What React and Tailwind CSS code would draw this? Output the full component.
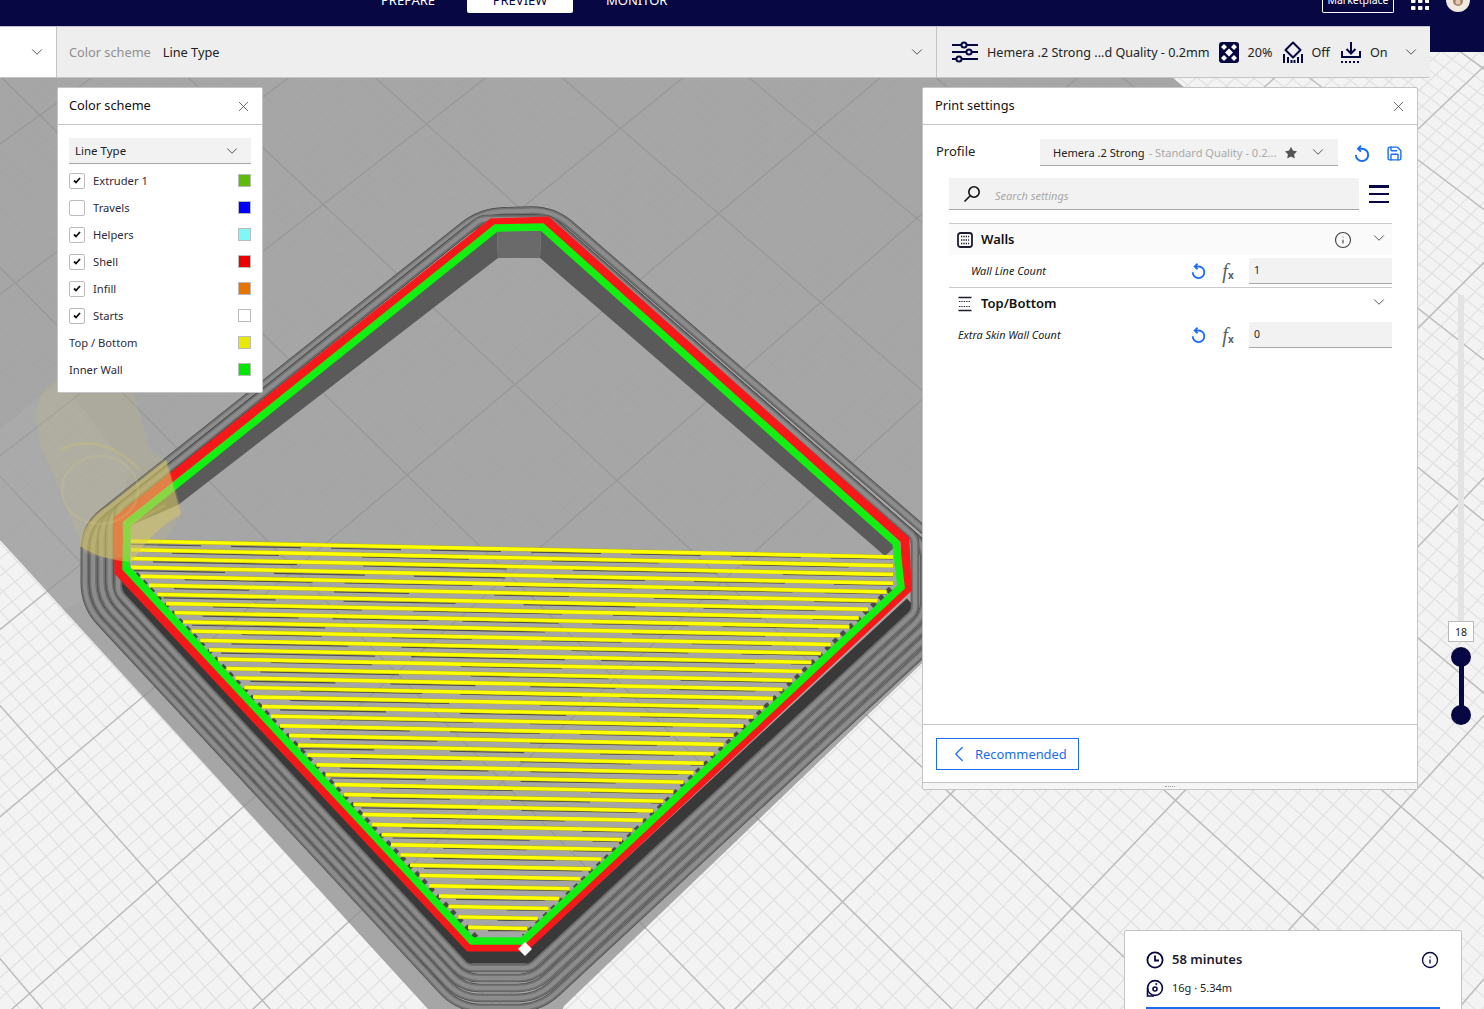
import { ChevronDown, ChevronLeft, Info, Save, Star, X } from 'lucide-react';

// --- 3D viewport drawing ---
const VP_A = [-4378, -4215];
const VP_B = [5875, -4115];

// line from a vanishing point through (x, 1009), run on past the bottom of the page
function gridLine(vp, x, key, props) {
    const t = 1.3;
    return <line key={key} x1={vp[0]} y1={vp[1]} x2={vp[0] + (x - vp[0]) * t} y2={vp[1] + (1009 - vp[1]) * t} {...props} />;
}

function Grid({ minor, major, minorWidth = 1.2, majorWidth = 1.5 }) {
    const lines = [];
    for (let k = -120; k <= 160; k++) {
        const isMajor = k % 10 === 0;
        const props = { stroke: isMajor ? major : minor, strokeWidth: isMajor ? majorWidth : minorWidth };
        lines.push({ z: isMajor ? 1 : 0, el: gridLine(VP_A, 270 + 22.73 * k, `a${k}`, props) });
        lines.push({ z: isMajor ? 1 : 0, el: gridLine(VP_B, 253 + 24.1 * k, `b${k}`, props) });
    }
    return <g>{lines.sort((a, b) => a.z - b.z).map((l) => l.el)}</g>;
}

function roundPath(pts, r) {
    const n = pts.length;
    let d = '';
    pts.forEach((p, i) => {
        const a = pts[(i - 1 + n) % n];
        const b = pts[(i + 1) % n];
        const la = Math.hypot(a[0] - p[0], a[1] - p[1]);
        const lb = Math.hypot(b[0] - p[0], b[1] - p[1]);
        const ra = Math.min(r, la / 2);
        const rb = Math.min(r, lb / 2);
        const s = [p[0] + ((a[0] - p[0]) * ra) / la, p[1] + ((a[1] - p[1]) * ra) / la];
        const e = [p[0] + ((b[0] - p[0]) * rb) / lb, p[1] + ((b[1] - p[1]) * rb) / lb];
        d += `${i === 0 ? 'M' : 'L'}${s[0]} ${s[1]} Q${p[0]} ${p[1]} ${e[0]} ${e[1]} `;
    });
    return d + 'Z';
}

function ringPoints(n) {
    const d = 10 + 12.2 * n;
    const bottom = 958 + 10 * n;
    const xl = 118 - 8.3 * (n - 1);
    const xr = 915 + 9.5 * (n - 1);
    const yR = (x) => 592 + (912 - x) * 0.927 + d;
    const lower = [
        [xr, yR(xr)],
        [912 - (bottom - 592 - d) / 0.927, bottom],
        [118 + (bottom - 570 - d) / 1.077, bottom],
        [xl, 570 + (xl - 118) * 1.077 + d],
    ];
    // the outermost ring runs apart from the others along the two back edges
    if (n === 5) return [...lower, [85, 527], [481, 212], [553, 210], [940, 544]];
    return [...lower, [xl, 470 + (167 - xl) * 0.8], [481, 219], [549, 219], [xr, 219 + (xr - 549) * 0.87]];
}

const RINGS = [5, 4, 3, 2, 1].map((n) => roundPath(ringPoints(n), n === 1 ? 6 : 8 + n * 3));

const INFILL = (() => {
    const out = [];
    let base = 541;
    for (let i = 0; i < 41; i++) {
        const yAt = (x) => base + 0.021 * (x - 130);
        let xL = 131;
        let xR = 893;
        for (let k = 0; k < 3; k++) {
            const yl = yAt(xL);
            const yr = yAt(xR);
            xL = yl <= 570 ? 131 : 127 + (yl - 567) / 1.072 + 5;
            xR = yr <= 585 ? 893 : 899 - (yr - 585) / 0.936 - 5;
        }
        out.push({ xL, xR, yL: yAt(xL), yR: yAt(xR), i });
        base += 8.7 + i * 0.04;
    }
    return out;
})();

const SHELL = 'M118 520 L492 223 L547 221 L905 540 L907 589 L525 947 L469 947 L119 572 Z';
const INNER = 'M127 524 L496 228 L542 227 L896 543 L901 587 L523 941 L472 941 L126 568 Z';

function Scene() {
    const floor = 'M0 78 L1173 78 L1190 92 L1000 590 L922 663 L563 1007 L563 1009 L428 1009 L0 540 Z';
    return (
        <svg className="absolute inset-0" width="1484" height="1009" viewBox="0 0 1484 1009">
            <defs>
                <clipPath id="floor-clip">
                    <path d={floor} />
                </clipPath>
            </defs>
            <rect width="1484" height="1009" fill="#f3f3f3" />
            <Grid minor="#e1e1e1" major="#bcbcbc" />
            <path d={floor} fill="#a6a6a6" />
            <g clipPath="url(#floor-clip)">
                <Grid minor="#a4a4a4" major="#989898" minorWidth={1} majorWidth={1.3} />
            </g>
            <path d="M0 430 L60 380 L130 470 L90 600 L60 610 L0 540 Z" fill="#fff" opacity="0.05" />

            {/* inner walls */}
            <polygon points="497,229 498,258 178,505 127,527" fill="#5a5a5a" />
            <polygon points="541,228 540,258 885,556 897,545" fill="#5a5a5a" />
            <polygon points="497,230 541,230 540,258 498,258" fill="#6a6a6a" />

            {/* top layer */}
            <path d="M134 575 L476 940 M892 590 L525 938" stroke="#4a4a4a" strokeWidth="9" strokeDasharray="5 5.5" fill="none" />
            <g fill="none" strokeLinecap="butt">
                {INFILL.map((l) => (
                    <line
                        key={`d${l.i}`}
                        x1={l.xL + ((l.i * 41) % 60)}
                        y1={l.yL + 3.4}
                        x2={l.xR}
                        y2={l.yR + 2}
                        stroke="#4c4c4c"
                        strokeWidth="1.2"
                        strokeDasharray={`${70 + ((l.i * 37) % 90)} ${30 + ((l.i * 53) % 70)}`}
                    />
                ))}
                {INFILL.map((l) => (
                    <line key={`o${l.i}`} x1={l.xL} y1={l.yL} x2={l.xR} y2={l.yR} stroke="#b5b500" strokeWidth="4.2" />
                ))}
                {INFILL.map((l) => (
                    <line key={`y${l.i}`} x1={l.xL} y1={l.yL} x2={l.xR} y2={l.yR} stroke="#ffff00" strokeWidth="3.4" />
                ))}
            </g>

            {/* skirt */}
            <g fill="none">
                <path d="M118 584 L465 956 L532 956 L912 604" stroke="#393939" strokeWidth="15" />
                {RINGS.map((d, i) => (
                    <g key={i}>
                        <path d={d} stroke="#4a4a4a" strokeWidth="8.6" />
                        <path d={d} stroke="#717171" strokeWidth="7.4" />
                        <path d={d} stroke="#8c8c8c" strokeWidth="4" />
                    </g>
                ))}
            </g>

            {/* shell and inner wall */}
            <g fill="none" strokeLinejoin="miter">
                <path d={SHELL} stroke="#f71919" strokeWidth="9" />
                <path d={INNER} stroke="#12f012" strokeWidth="7.5" />
            </g>
            <polygon points="525,942 532,949 525,956 518,949" fill="#fff" />

            {/* print head */}
            <path d="M36 420 Q36 390 56 380 L128 380 Q140 410 150 450 L168 462 L182 512 Q170 540 150 550 Q110 565 84 552 L60 490 L40 445 Z" fill="#c9c07e" opacity="0.2" />
            <path d="M80 546 Q82 522 108 506 L166 460 L181 514 Q150 532 132 562 Q100 560 80 546 Z" fill="#d8c860" opacity="0.5" />
            <path d="M130 525 L165 505 M60 450 Q100 430 140 470" stroke="#d8c860" strokeWidth="3" fill="none" opacity="0.25" />
            <ellipse cx="100" cy="490" rx="38" ry="34" fill="none" stroke="#d8ce86" strokeWidth="2.5" opacity="0.2" />
        </svg>
    );
}

// --- small icons ---
const NAVY = '#070743';

function Chev({ className = '' }) {
    return (
        <span className={`flex w-[14px] shrink-0 justify-center text-[#444] ${className}`}>
            <ChevronDown size={18} strokeWidth={1.2} className="shrink-0" />
        </span>
    );
}

function Sliders() {
    return (
        <svg width="26" height="22" viewBox="0 0 26 22" fill="none" stroke={NAVY} strokeWidth="2">
            <path d="M0 4H9M15 4H26M0 11H14M20 11H26M0 18H4M10 18H26" />
            <circle cx="12" cy="4" r="2.6" />
            <circle cx="17" cy="11" r="2.6" />
            <circle cx="7" cy="18" r="2.6" />
        </svg>
    );
}

function InfillIcon() {
    return (
        <svg width="20" height="21" viewBox="0 0 20 21">
            <rect width="20" height="21" rx="3" fill={NAVY} />
            <g fill="#fff">
                <polygon points="10,6.5 14,10.5 10,14.5 6,10.5" />
                <polygon points="5,2 8,5 5,8 2,5" />
                <polygon points="15,2 18,5 15,8 12,5" />
                <polygon points="5,13 8,16 5,19 2,16" />
                <polygon points="15,13 18,16 15,19 12,16" />
            </g>
        </svg>
    );
}

function SupportIcon() {
    return (
        <svg width="20" height="22" viewBox="0 0 20 22" fill="none" stroke={NAVY}>
            <path d="M10 1.5 L17.5 9 L10 16.5 L2.5 9 Z" strokeWidth="2" strokeLinejoin="round" />
            <path d="M1 13V22M5 16V22M8.5 19V22M11.5 19V22M15 16V22M19 13V22" strokeWidth="2" />
        </svg>
    );
}

function AdhesionIcon() {
    return (
        <svg width="20" height="21" viewBox="0 0 20 21" fill="none" stroke={NAVY} strokeWidth="2">
            <path d="M10 0V11M5.5 7L10 11.5L14.5 7" />
            <path d="M1 9V15H19V9" />
            <path d="M0 20H20" strokeDasharray="2 2" />
        </svg>
    );
}

function WallsIcon() {
    return (
        <svg width="16" height="16" viewBox="0 0 16 16" fill="none" stroke="#1c1c2e">
            <rect x="1" y="1" width="14" height="14" rx="2.5" strokeWidth="1.8" />
            <path d="M4 4.5H12M4 8H12M4 11.5H12" strokeWidth="1.3" strokeDasharray="1.3 1.05" />
        </svg>
    );
}

function TopBottomIcon() {
    return (
        <svg width="16" height="16" viewBox="0 0 16 16" fill="none" stroke="#1c1c2e">
            <path d="M1.5 1.5H14.5M1.5 14.5H14.5" strokeWidth="1.5" />
            <path d="M2 5.5H14M2 10.5H14" strokeWidth="1.2" strokeDasharray="1.3 1.1" />
        </svg>
    );
}

function SpoolIcon() {
    return (
        <svg width="18" height="18" viewBox="0 0 18 18" fill="none" stroke={NAVY} strokeWidth="1.6">
            <circle cx="9" cy="9" r="7.4" />
            <circle cx="9" cy="10" r="2" />
            <path d="M9.5 4.5L11 5.5" />
            <path d="M1.5 9V17H8" />
        </svg>
    );
}

function FxIcon() {
    return (
        <span className="relative flex h-[18px] w-[16px] shrink-0 items-center justify-center font-['Liberation_Serif',serif] text-[20px] italic leading-none text-[#5f5f5f]">
            f<span className="mt-[8px] font-['Noto_Sans',sans-serif] text-[10px] font-bold not-italic leading-none">x</span>
        </span>
    );
}

function Undo({ size = 16 }) {
    return (
        <svg width={size} height={size} viewBox="0 0 16 16" fill="none" stroke="#196ef0" strokeWidth="1.8" className="shrink-0">
            <path d="M5 3.5H8.5A5.8 5.8 0 1 1 2.7 9.3" />
            <path d="M7.5 0.7L4.7 3.5L7.5 6.3" />
        </svg>
    );
}

// --- panels ---
const COLORS = [
    { label: 'Extruder 1', color: 'bg-[#5fbb0a]', check: true },
    { label: 'Travels', color: 'bg-[#0000ff]', check: false },
    { label: 'Helpers', color: 'bg-[#7ff7f7]', check: true },
    { label: 'Shell', color: 'bg-[#ee0000]', check: true },
    { label: 'Infill', color: 'bg-[#e87400]', check: true },
    { label: 'Starts', color: 'bg-white', check: true },
    { label: 'Top / Bottom', color: 'bg-[#e8e800]' },
    { label: 'Inner Wall', color: 'bg-[#00e800]' },
];

function PanelHead({ title, pad }) {
    return (
        <div className={`flex h-[37px] shrink-0 items-center justify-between border-b border-[#c4c4c4] text-[12.75px] text-[#111] ${pad}`}>
            <span>{title}</span>
            <X size={17} strokeWidth={1.1} className="text-[#444]" />
        </div>
    );
}

function ColorPanel() {
    return (
        <div className="absolute left-[57px] top-[87px] flex h-[306px] w-[206px] flex-col rounded-[2px] border border-[#c4c4c4] bg-white">
            <PanelHead title="Color scheme" pad="pl-[11px] pr-[10px]" />
            <div className="px-[11px] pt-[13px]">
                <div className="flex h-[26px] items-center justify-between border-b border-[#a8a8a8] bg-[#f2f2f2] pl-[6px] pr-[12px] text-[11.5px] text-[#222]">
                    <span>Line Type</span>
                    <Chev />
                </div>
                <div className="mt-[4px] flex flex-col">
                    {COLORS.map((c) => (
                        <div key={c.label} className="flex h-[27px] items-center text-[11.2px] text-[#2b2b3a]">
                            {c.check !== undefined && (
                                <span className="mb-[2px] mr-[8px] flex h-[16px] w-[16px] items-center justify-center rounded-[2px] border border-[#bbb] bg-white">
                                    {c.check && (
                                        <svg width="8" height="7" viewBox="0 0 8 7" fill="none" stroke="#111" strokeWidth="1.8">
                                            <path d="M1 3.5L3 5.5L7 1" />
                                        </svg>
                                    )}
                                </span>
                            )}
                            <span>{c.label}</span>
                            <span className={`mb-[2px] ml-auto h-[13px] w-[13px] border border-[#bbb] ${c.color}`} />
                        </div>
                    ))}
                </div>
            </div>
        </div>
    );
}

function SettingRow({ label, value, indent }) {
    return (
        <div className="flex h-[32px] items-center">
            <span className={`pt-[1px] text-[10.85px] italic text-[#222] ${indent}`}>{label}</span>
            <span className="ml-auto mr-[14px]"><Undo /></span>
            <span className="mr-[13px]"><FxIcon /></span>
            <div className="flex h-[26px] w-[143px] items-center border-b border-[#a8a8a8] bg-[#f2f2f2] pl-[5px] pt-[1px] text-[10.5px] text-[#222]">{value}</div>
        </div>
    );
}

function SettingsPanel() {
    return (
        <div className="absolute left-[922px] top-[87px] flex h-[703px] w-[496px] flex-col rounded-[2px] border border-[#c4c4c4] bg-white">
            <PanelHead title="Print settings" pad="pl-[12px] pr-[10px]" />
            <div className="flex-1 pl-[13px]">
                <div className="mt-[14px] flex h-[26px] items-center">
                    <span className="w-[104px] text-[13px] text-[#222]">Profile</span>
                    <div className="flex h-[27px] w-[298px] items-center border-b border-[#a8a8a8] bg-[#f2f2f2] pl-[13px] pr-[13px] pt-[3px] text-[11.1px]">
                        <span className="text-[#222]">Hemera .2 Strong</span>
                        <span className="ml-[4px] text-[#a9a9a9]">- Standard Quality - 0.2...</span>
                        <Star size={14} fill="#555" strokeWidth={0} className="ml-auto mr-[13px] shrink-0" />
                        <Chev className="-mt-[2px]" />
                    </div>
                    <span className="ml-[15px] mt-[2px]"><Undo size={17} /></span>
                    <Save size={17} strokeWidth={2} className="ml-[16px] mt-[2px] text-[#196ef0]" />
                </div>
                <div className="mt-[13px] flex items-center pl-[13px]">
                    <div className="flex h-[32px] w-[410px] items-center border-b border-[#a8a8a8] bg-[#f2f2f2] pl-[14px] text-[11px] italic text-[#a9a9a9]">
                        <svg width="18" height="18" viewBox="0 0 18 18" fill="none" stroke="#111" strokeWidth="1.6">
                            <circle cx="11" cy="7" r="5.2" />
                            <path d="M7 11L1.5 16.5" />
                        </svg>
                        <span className="ml-[14px] pt-[5px]">Search settings</span>
                    </div>
                    <div className="ml-[10px] flex h-[18px] w-[20px] flex-col justify-between">
                        <span className="h-[2.5px] bg-[#070743]" />
                        <span className="h-[2.5px] bg-[#070743]" />
                        <span className="h-[2.5px] bg-[#070743]" />
                    </div>
                </div>
                <div className="ml-[13px] mt-[13px] w-[443px]">
                    <div className="flex h-[32px] items-center border-t border-[#c9c9c9] bg-[#fafafa] pl-[8px] pr-[6px] text-[13px] font-semibold text-[#111]">
                        <WallsIcon />
                        <span className="ml-[8px]">Walls</span>
                        <Info size={18} strokeWidth={1.5} className="ml-auto mr-[20px] text-[#444]" />
                        <Chev className="-mt-[3px]" />
                    </div>
                    <SettingRow label="Wall Line Count" value="1" indent="pl-[22px]" />
                    <div className="flex h-[32px] items-center border-t border-[#c9c9c9] pl-[8px] pr-[6px] text-[13px] font-semibold text-[#111]">
                        <TopBottomIcon />
                        <span className="ml-[8px]">Top/Bottom</span>
                        <Chev className="-mt-[3px] ml-auto" />
                    </div>
                    <SettingRow label="Extra Skin Wall Count" value="0" indent="pl-[9px]" />
                </div>
            </div>
            <div className="flex h-[58px] shrink-0 items-center border-t border-[#c4c4c4] pl-[13px]">
                <div className="flex h-[32px] w-[143px] items-center border border-[#196ef0] pl-[9px] text-[12.9px] text-[#196ef0]">
                    <ChevronLeft size={26} strokeWidth={1.1} className="shrink-0" />
                    <span className="ml-[3px] pt-[2px]">Recommended</span>
                </div>
            </div>
            <div className="flex h-[7px] shrink-0 items-center justify-center border-t border-[#c4c4c4] bg-[#f5f5f5]">
                <span className="h-px w-[10px] border-t border-dotted border-[#999]" />
            </div>
        </div>
    );
}

function LayerSlider() {
    return (
        <div className="absolute left-[1448px] top-[295px] flex w-[26px] flex-col items-center">
            <span className="h-[326px] w-[6px] bg-[#e3e3e3]" />
            <span className="flex h-[21px] w-[26px] items-center justify-center border border-[#bbb] bg-white pt-[2px] text-[10.5px] text-[#222]">18</span>
            <span className="mt-[5px] h-[20px] w-[20px] rounded-full bg-[#070743]" />
            <span className="-my-[1px] h-[40px] w-[5px] bg-[#070743]" />
            <span className="h-[20px] w-[20px] rounded-full bg-[#070743]" />
        </div>
    );
}

function JobPanel() {
    return (
        <div className="absolute left-[1124px] top-[930px] h-[90px] w-[338px] rounded-t-[2px] border border-[#c4c4c4] bg-white px-[21px]">
            <div className="mt-[20px] flex h-[18px] items-center text-[13px] font-semibold text-[#1c1c2e]">
                <svg width="18" height="18" viewBox="0 0 18 18" fill="none" stroke={NAVY} strokeWidth="1.8">
                    <circle cx="9" cy="9" r="7.6" />
                    <path d="M9 4.5V9.5H13" />
                </svg>
                <span className="ml-[8px]">58 minutes</span>
                <Info size={18} strokeWidth={1.8} className="ml-auto mr-[1px] text-[#070743]" />
            </div>
            <div className="mt-[10px] flex h-[18px] items-center text-[11px] text-[#222]">
                <SpoolIcon />
                <span className="ml-[8px]">16g · 5.34m</span>
            </div>
            <div className="mt-[10px] h-[3px] w-[294px] bg-[#196ef0]" />
        </div>
    );
}

function Header() {
    return (
        <div className="relative h-[52px] bg-[#070743] text-white">
            <div className="flex h-[13px] items-end overflow-hidden pl-[381px] text-[13px] leading-5">
                <span className="pb-[3px]">PREPARE</span>
                <span className="ml-[32px] flex h-[13px] w-[106px] items-end justify-center rounded-b-[2px] bg-white pb-[3px] text-[#070743]">PREVIEW</span>
                <span className="ml-[33px] pb-[3px]">MONITOR</span>
                <span className="ml-auto flex h-[13px] w-[72px] items-end justify-center rounded-b-[2px] border border-t-0 border-white pb-[2px] text-[10.5px]">Marketplace</span>
                <svg className="ml-[17px]" width="18" height="13" viewBox="0 0 18 13" fill="#fff">
                    <rect x="0" y="-2" width="4.5" height="5" rx="1" />
                    <rect x="7" y="-2" width="4.5" height="5" rx="1" />
                    <rect x="14" y="-2" width="4.5" height="5" rx="1" />
                    <rect x="0" y="6" width="4.5" height="4" rx="1" />
                    <rect x="7" y="6" width="4.5" height="4" rx="1" />
                    <rect x="14" y="6" width="4.5" height="4" rx="1" />
                </svg>
                <svg className="ml-[17px] mr-[14px]" width="24" height="13" viewBox="0 0 24 13">
                    <circle cx="12" cy="0" r="12" fill="#efe9df" />
                    <circle cx="12" cy="1" r="5" fill="#a88266" />
                    <circle cx="12" cy="2" r="2.5" fill="#e2c8ae" />
                </svg>
            </div>
        </div>
    );
}

function Toolbar() {
    return (
        <div className="absolute left-0 top-[26px] flex h-[52px] w-[1430px] rounded-br-[2px] border-y border-[#c4c4c4] bg-[#eeeeee] text-[12.75px] text-[#222]">
            <div className="flex w-[57px] items-center justify-end border-r border-[#c4c4c4] bg-white pr-[12px]">
                <Chev />
            </div>
            <div className="flex w-[880px] items-center border-r border-[#c4c4c4] pl-[12px] pr-[12px] pt-[1px]">
                <span className="text-[#8f8f8f]">Color scheme</span>
                <span className="ml-[12px]">Line Type</span>
                <Chev className="ml-auto -mt-[1px]" />
            </div>
            <div className="flex flex-1 items-center pl-[15px] pr-[12px] text-[12.6px]">
                <Sliders />
                <span className="ml-[9px] pt-[2px]">Hemera .2 Strong ...d Quality - 0.2mm</span>
                <span className="ml-[9px]"><InfillIcon /></span>
                <span className="ml-[9px] pt-[2px]">20%</span>
                <span className="ml-[11px]"><SupportIcon /></span>
                <span className="ml-[8px] pt-[2px]">Off</span>
                <span className="ml-[11px]"><AdhesionIcon /></span>
                <span className="ml-[9px] pt-[2px]">On</span>
                <Chev className="ml-auto" />
            </div>
        </div>
    );
}

export default function App() {
    return (
        <div className="relative h-[1009px] w-full overflow-hidden font-['Noto_Sans',sans-serif]">
            <Scene />
            <Header />
            <Toolbar />
            <ColorPanel />
            <SettingsPanel />
            <LayerSlider />
            <JobPanel />
        </div>
    );
}
